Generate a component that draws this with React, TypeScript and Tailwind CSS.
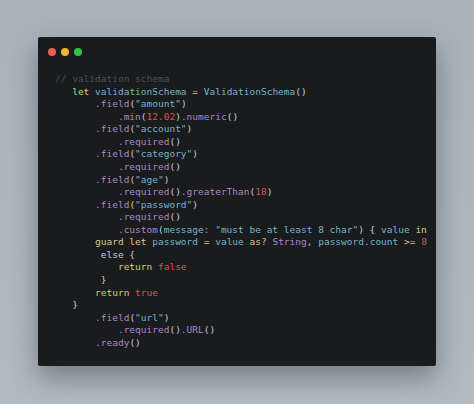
const K = "text-[#d8c88a]" // keyword
const I = "text-[#72b4cc]" // identifier / string
const P = "text-[#a987c9]" // method
const N = "text-[#d0575c]" // number / literal
const W = "text-[#c9cbcf]" // punctuation
const C = "text-[#4c5159]" // comment

type Tok = [string, string]

const lines: Tok[][] = [
    [[C, "// validation schema"]],
    [[W, "   "], [K, "let "], [I, "validationSchema "], [K, "= "], [I, "ValidationSchema"], [W, "()"]],
    [[W, "       "], [P, ".field"], [W, "("], [I, "\"amount\""], [W, ")"]],
    [[W, "           "], [P, ".min"], [W, "("], [N, "12.02"], [W, ")"], [P, ".numeric"], [W, "()"]],
    [[W, "       "], [P, ".field"], [W, "("], [I, "\"account\""], [W, ")"]],
    [[W, "           "], [P, ".required"], [W, "()"]],
    [[W, "       "], [P, ".field"], [W, "("], [I, "\"category\""], [W, ")"]],
    [[W, "           "], [P, ".required"], [W, "()"]],
    [[W, "       "], [P, ".field"], [W, "("], [I, "\"age\""], [W, ")"]],
    [[W, "           "], [P, ".required"], [W, "()"], [P, ".greaterThan"], [W, "("], [N, "18"], [W, ")"]],
    [[W, "       "], [P, ".field"], [W, "("], [I, "\"password\""], [W, ")"]],
    [[W, "           "], [P, ".required"], [W, "()"]],
    [[W, "           "], [P, ".custom"], [W, "("], [I, "message: \"must be at least 8 char\""], [W, ") { "], [I, "value "], [K, "in"]],
    [[W, "       "], [K, "guard let "], [I, "password "], [K, "= "], [I, "value "], [K, "as? "], [P, "String"], [W, ", "], [I, "password.count "], [K, ">= "], [N, "8"]],
    [[W, "        else {"]],
    [[W, "           "], [K, "return "], [N, "false"]],
    [[W, "        }"]],
    [[W, "       "], [K, "return "], [N, "true"]],
    [[W, "   }"]],
    [[W, "       "], [P, ".field"], [W, "("], [I, "\"url\""], [W, ")"]],
    [[W, "           "], [P, ".required"], [W, "()"], [P, ".URL"], [W, "()"]],
    [[W, "       "], [P, ".ready"], [W, "()"]],
]

export default function App() {
    return (
        <div className="w-[474px] h-[404px] bg-gradient-to-b from-[#a9b2ba] to-[#b3bbc2] pt-[37px] pl-[38px]">
            <div className="w-[398px] h-[329px] bg-[#1a1b1d] rounded-[2px] shadow-[0_12px_28px_rgba(40,48,56,0.45)] pt-[11px]">
                <div className="flex gap-[5px] pl-[10px]">
                    <span className="w-[8px] h-[8px] rounded-full bg-[#ec5f57]" />
                    <span className="w-[8px] h-[8px] rounded-full bg-[#f0b62d]" />
                    <span className="w-[8px] h-[8px] rounded-full bg-[#2dc845]" />
                </div>
                <pre
                    className="mt-[17px] pl-[17px] text-[9.5px] leading-[12.57px]"
                    style={{ fontFamily: '"DejaVu Sans Mono", monospace' }}
                >
                    {lines.map((line, i) => (
                        <div key={i} className="whitespace-pre">
                            {line.map(([c, t], j) => (
                                <span key={j} className={c}>{t}</span>
                            ))}
                        </div>
                    ))}
                </pre>
            </div>
        </div>
    )
}
